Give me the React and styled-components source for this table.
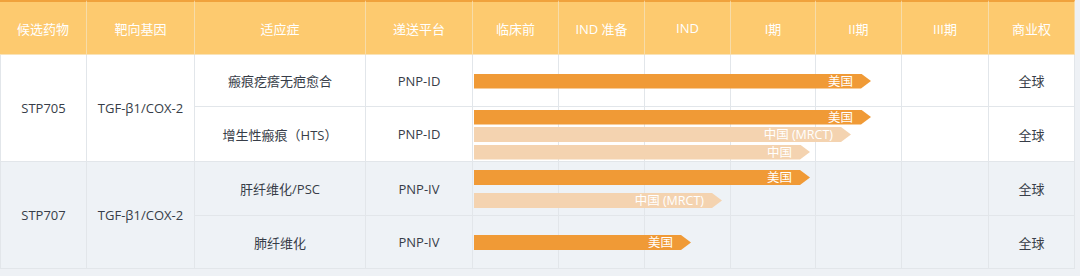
import React from "react";
import styled, { createGlobalStyle } from "styled-components";

const GlobalStyle = createGlobalStyle`
  body {
    margin: 0;
    background: #eef1f5;
    font-family: "Open Sans", "Noto Sans CJK SC", sans-serif;
  }
`;

const Page = styled.div`
  width: 1080px;
  height: 276px;
  background: #eef1f5;
`;

const Table = styled.div`
  display: grid;
  width: 1075px;
  grid-template-columns: 87px 108px 171px 107px 86px 86px 86px 85px 86px 87px 86px;
  grid-template-rows: 55px 52px 55px 54px 53px;
  background: #fff;
`;

const Head = styled.div`
  grid-row: 1;
  display: flex;
  align-items: center;
  justify-content: center;
  background: #fdca6f;
  color: #fff;
  font-size: 13px;
  border-top: 2px solid #f0a23c;
  border-right: 1px solid #f7dca8;
  border-bottom: 1px solid #f9e3b8;
`;

const Cell = styled.div`
  grid-column: ${(p) => p.$col};
  grid-row: ${(p) => p.$row} / span ${(p) => p.$span || 1};
  display: flex;
  align-items: center;
  justify-content: center;
  background: ${(p) => (p.$shade ? "#eef2f6" : "#fff")};
  border-right: 1px solid #e2e6ea;
  border-bottom: 1px solid #e2e6ea;
  border-left: ${(p) => (p.$col === 1 ? "1px solid #e2e6ea" : "none")};
  font-size: 13px;
  color: #373d48;
`;

const Track = styled.div`
  grid-column: 5 / 11;
  grid-row: ${(p) => p.$row};
  display: flex;
  flex-direction: column;
  justify-content: space-evenly;
  padding-left: 1px;
  z-index: 1;
`;

const Bar = styled.div`
  height: 15px;
  box-sizing: border-box;
  background: ${(p) => (p.$light ? "#f4d3b0" : "#f09a36")};
  clip-path: polygon(0 0, calc(100% - 10px) 0, 100% 50%, calc(100% - 10px) 100%, 0 100%);
  color: #fff;
  font-size: 12.5px;
  line-height: 15px;
  text-align: right;
  padding-right: 18px;
  white-space: nowrap;
`;

const headers = [
  "候选药物",
  "靶向基因",
  "适应症",
  "递送平台",
  "临床前",
  "IND 准备",
  "IND",
  "I期",
  "II期",
  "III期",
  "商业权",
];

const groups = [
  {
    drug: "STP705",
    gene: "TGF-β1/COX-2",
    shade: false,
    rows: [
      {
        indication: "瘢痕疙瘩无疤愈合",
        platform: "PNP-ID",
        bars: [{ label: "美国", width: 397 }],
      },
      {
        indication: "增生性瘢痕（HTS）",
        platform: "PNP-ID",
        bars: [
          { label: "美国", width: 397 },
          { label: "中国 (MRCT)", width: 377, light: true },
          { label: "中国", width: 336, light: true },
        ],
      },
    ],
  },
  {
    drug: "STP707",
    gene: "TGF-β1/COX-2",
    shade: true,
    rows: [
      {
        indication: "肝纤维化/PSC",
        platform: "PNP-IV",
        bars: [
          { label: "美国", width: 336 },
          { label: "中国 (MRCT)", width: 248, light: true },
        ],
      },
      {
        indication: "肺纤维化",
        platform: "PNP-IV",
        bars: [{ label: "美国", width: 217 }],
      },
    ],
  },
];

const App = () => {
  let rowIndex = 2;
  const body = [];

  groups.forEach((g) => {
    const start = rowIndex;
    body.push(
      <Cell key={`d${start}`} $col={1} $row={start} $span={g.rows.length} $shade={g.shade}>
        {g.drug}
      </Cell>,
      <Cell key={`g${start}`} $col={2} $row={start} $span={g.rows.length} $shade={g.shade}>
        {g.gene}
      </Cell>
    );
    g.rows.forEach((r) => {
      const row = rowIndex;
      body.push(
        <Cell key={`i${row}`} $col={3} $row={row} $shade={g.shade}>
          {r.indication}
        </Cell>,
        <Cell key={`p${row}`} $col={4} $row={row} $shade={g.shade}>
          {r.platform}
        </Cell>
      );
      // empty phase cells keep the grid lines under the bars
      for (let c = 5; c <= 10; c++) {
        body.push(<Cell key={`e${row}-${c}`} $col={c} $row={row} $shade={g.shade} />);
      }
      body.push(
        <Cell key={`c${row}`} $col={11} $row={row} $shade={g.shade}>
          全球
        </Cell>,
        <Track key={`t${row}`} $row={row}>
          {r.bars.map((b, i) => (
            <Bar key={i} $light={b.light} style={{ width: b.width }}>
              {b.label}
            </Bar>
          ))}
        </Track>
      );
      rowIndex++;
    });
  });

  return (
    <Page>
      <GlobalStyle />
      <Table>
        {headers.map((h) => (
          <Head key={h}>{h}</Head>
        ))}
        {body}
      </Table>
    </Page>
  );
};

export default App;
